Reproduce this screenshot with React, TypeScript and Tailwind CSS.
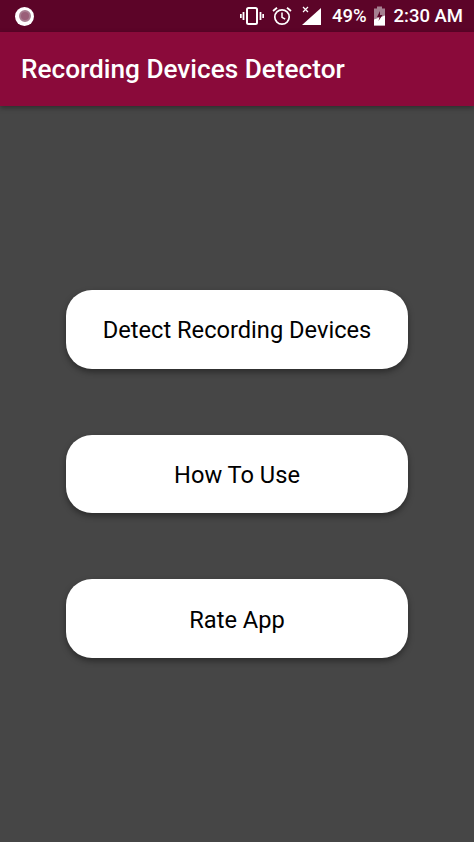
export default function App() {
  const font = { fontFamily: "Roboto, sans-serif" };
  return (
    <div className="w-[474px] h-[842px] flex flex-col bg-[#464646] overflow-hidden font-['Roboto',sans-serif]" style={font}>
      <div className="h-[32px] shrink-0 bg-[#5c0428] flex items-center justify-between pl-[15px] pr-[11px] text-white">
        <div className="w-[19px] h-[19px] rounded-full bg-white flex items-center justify-center">
          <div className="w-[12px] h-[12px] rounded-full bg-[#9a5f78] border-[2px] border-[#a87d90]" />
        </div>
        <div className="flex items-center">
          <svg width="24" height="20" viewBox="0 0 24 20" fill="none" className="mr-[8px]">
            <rect x="7" y="2" width="10" height="16" rx="1.5" stroke="white" strokeWidth="2" />
            <path d="M3.5 6v8M0.8 8v4M20.5 6v8M23.2 8v4" stroke="white" strokeWidth="1.8" />
          </svg>
          <svg width="20" height="20" viewBox="0 0 20 20" fill="none" className="mr-[10px]">
            <circle cx="10" cy="11" r="7.2" stroke="white" strokeWidth="1.7" />
            <path d="M10 6.5V11.3L13.2 13.2" stroke="white" strokeWidth="1.5" />
            <path d="M1 5L5 1.7M19 5L15 1.7" stroke="white" strokeWidth="1.8" />
          </svg>
          <svg width="20" height="20" viewBox="0 0 20 20" fill="none" className="mr-[10px]">
            <path d="M0 19L19 2V19Z" fill="white" />
            <path d="M1 1L6 6M6 1L1 6" stroke="white" strokeWidth="1.2" />
          </svg>
          <span className="text-[18.5px] leading-none font-medium mr-[6px] whitespace-nowrap">49%</span>
          <svg width="13" height="20" viewBox="0 0 13 20" className="mr-[8px]">
            <path d="M4 0.5H9V2.5H12V19.5H1V2.5H4Z" fill="#a57f90" />
            <path d="M1 19.5V13.5L12 9.5V19.5Z" fill="white" />
            <path d="M7 5L4 11H6.5L5.5 15L9.5 9H7Z" fill="#5c0428" />
          </svg>
          <span className="text-[18.5px] leading-none font-medium whitespace-nowrap">2:30 AM</span>
        </div>
      </div>
      <div className="h-[74px] shrink-0 bg-[#8a0a3a] flex items-center pl-[21px] pt-[2px] text-white text-[26.2px] font-medium shadow-[0_2px_5px_rgba(0,0,0,0.35)] relative">
        Recording Devices Detector
      </div>
      <div className="flex flex-col items-center gap-[66px] pt-[184px]">
        <button className="w-[342px] h-[78.5px] pt-[2px] rounded-[26px] bg-white text-black text-[23.65px] shadow-[0_3px_6px_rgba(0,0,0,0.4)]">Detect Recording Devices</button>
        <button className="w-[342px] h-[78.5px] pt-[3px] rounded-[26px] bg-white text-black text-[23.65px] shadow-[0_3px_6px_rgba(0,0,0,0.4)]">How To Use</button>
        <button className="w-[342px] h-[78.5px] pt-[4px] rounded-[26px] bg-white text-black text-[23.65px] shadow-[0_3px_6px_rgba(0,0,0,0.4)]">Rate App</button>
      </div>
    </div>
  );
}
